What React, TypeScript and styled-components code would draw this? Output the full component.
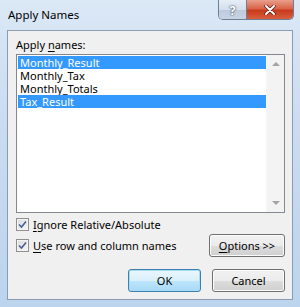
import styled, {createGlobalStyle} from "styled-components";

const GlobalStyle = createGlobalStyle`
    html, body {
        margin: 0;
        padding: 0;
        background: #ffffff;
    }
    #root {
        width: 300px;
        height: 307px;
    }
`;

const Frame = styled.div`
    width: 300px;
    height: 307px;
    box-sizing: border-box;
    display: flex;
    flex-direction: column;
    padding: 0 7px 7px 7px;
    background: linear-gradient(180deg, #dbe8f6 0%, #c9dcf1 40%, #bcd4ee 100%);
    font-family: "Noto Sans", "Open Sans", sans-serif;
    font-size: 11px;
    color: #000000;
`;

const TitleBar = styled.div`
    height: 30px;
    flex-shrink: 0;
    display: flex;
    align-items: flex-start;
`;

const Title = styled.span`
    padding-top: 7px;
    padding-left: 1px;
    font-size: 11.5px;
`;

const CaptionButtons = styled.div`
    margin-left: auto;
    margin-right: -1px;
    display: flex;
    height: 19px;
    border: 1px solid #6d7f95;
    border-top: none;
    border-radius: 0 0 5px 5px;
    overflow: hidden;
`;

const HelpButton = styled.div`
    width: 27px;
    display: flex;
    align-items: center;
    justify-content: center;
    background: linear-gradient(180deg, #e6eef7 0%, #d3dfec 50%, #bccbdc 51%, #c7d5e5 100%);
    border-right: 1px solid #6d7f95;
    color: #ffffff;
    font-weight: bold;
    font-size: 13px;
    text-shadow: 0 0 2px #36475c, 0 0 1px #36475c;
`;

const CloseButton = styled.div`
    width: 46px;
    display: flex;
    align-items: center;
    justify-content: center;
    background: linear-gradient(180deg, #ea9f8c 0%, #d9644a 45%, #c93a1c 55%, #d8603f 100%);
`;

const Panel = styled.div`
    flex: 1;
    display: flex;
    flex-direction: column;
    background: #f0f0f0;
    border: 1px solid #8b9bb0;
    padding: 6px 7px 7px 8px;

    & > * {
        flex-shrink: 0;
    }
`;

const Label = styled.div`
    height: 16px;
    line-height: 16px;
`;

const ListBox = styled.div`
    margin-top: 1px;
    height: 159px;
    box-sizing: border-box;
    display: flex;
    background: #ffffff;
    border: 1px solid #828790;
`;

const Items = styled.div`
    flex: 1;
    display: flex;
    flex-direction: column;
    padding: 1px 0 0 1px;
`;

const Item = styled.div<{$selected?: boolean}>`
    height: 13px;
    line-height: 13px;
    padding-left: 2px;
    background: ${({$selected}) => ($selected ? "#3399ff" : "transparent")};
    color: ${({$selected}) => ($selected ? "#ffffff" : "#000000")};
    white-space: nowrap;
`;

const ScrollBar = styled.div`
    width: 17px;
    display: flex;
    flex-direction: column;
    justify-content: space-between;
    align-items: center;
    background: #f3f3f3;
    border-left: 1px solid #f7f7f7;
    padding: 7px 0;
`;

const Arrow = styled.div<{$down?: boolean}>`
    width: 0;
    height: 0;
    border-left: 4px solid transparent;
    border-right: 4px solid transparent;
    ${({$down}) =>
        $down ? "border-top: 4px solid #a3a3a3;" : "border-bottom: 4px solid #a3a3a3;"}
`;

const CheckRow = styled.div<{$first?: boolean}>`
    display: flex;
    align-items: center;
    gap: 4px;
    height: ${({$first}) => ($first ? "20px" : "22px")};
    margin-top: ${({$first}) => ($first ? "1px" : "0")};
`;

const Options = styled.div`
    display: flex;
    align-items: center;
    justify-content: space-between;
    height: 23px;
`;

const Box = styled.div`
    width: 11px;
    height: 11px;
    border: 1px solid #8f8f8f;
    background: linear-gradient(135deg, #dcdcdc 0%, #f6f6f6 100%);
    display: flex;
    align-items: center;
    justify-content: center;
    box-shadow: inset 0 0 0 1px #f4f4f4;
`;

const Accel = styled.span`
    text-decoration: underline;
    text-underline-offset: 2px;
`;

const Button = styled.button<{$default?: boolean; $wide?: boolean}>`
    width: ${({$wide}) => ($wide ? "76px" : "73px")};
    height: 23px;
    box-sizing: border-box;
    border-radius: 3px;
    border: 1px solid ${({$default}) => ($default ? "#3c7fb1" : "#707070")};
    background: ${({$default}) =>
        $default
            ? "linear-gradient(180deg, #eaf6fd 0%, #d9f0fc 50%, #bee6fd 51%, #a7d9f5 100%)"
            : "linear-gradient(180deg, #f2f2f2 0%, #ebebeb 50%, #dddddd 51%, #cfcfcf 100%)"};
    box-shadow: inset 0 0 0 1px ${({$default}) => ($default ? "#a7dcf6" : "#fcfcfc")};
    font-family: "Noto Sans", "Open Sans", sans-serif;
    font-size: 11px;
    color: #000000;
    padding: 0;
`;

const Footer = styled.div`
    display: flex;
    justify-content: flex-end;
    gap: 11px;
    margin-top: 12px;
`;

function Check() {
    return (
        <Box>
            <svg width="9" height="9" viewBox="0 0 9 9">
                <path d="M1 4.5 L3.5 7 L8 1.5" fill="none" stroke="#4a5f97" strokeWidth="1.6" />
            </svg>
        </Box>
    );
}

export default function App() {
    return (
        <>
            <GlobalStyle />
            <Frame>
                <TitleBar>
                    <Title>Apply Names</Title>
                    <CaptionButtons>
                        <HelpButton>?</HelpButton>
                        <CloseButton>
                            <svg width="12" height="10" viewBox="0 0 12 10">
                                <path d="M2 1 L10 9 M10 1 L2 9" stroke="#5a1a10" strokeWidth="3.4" strokeLinecap="round" />
                                <path d="M2 1 L10 9 M10 1 L2 9" stroke="#ffffff" strokeWidth="2" strokeLinecap="round" />
                            </svg>
                        </CloseButton>
                    </CaptionButtons>
                </TitleBar>
                <Panel>
                    <Label>
                        Apply <Accel>n</Accel>ames:
                    </Label>
                    <ListBox>
                        <Items>
                            <Item $selected>Monthly_Result</Item>
                            <Item>Monthly_Tax</Item>
                            <Item>Monthly_Totals</Item>
                            <Item $selected>Tax_Result</Item>
                        </Items>
                        <ScrollBar>
                            <Arrow />
                            <Arrow $down />
                        </ScrollBar>
                    </ListBox>
                    <CheckRow $first>
                        <Check />
                        <span>
                            <Accel>I</Accel>gnore Relative/Absolute
                        </span>
                    </CheckRow>
                    <Options>
                        <CheckRow>
                            <Check />
                            <span>
                                <Accel>U</Accel>se row and column names
                            </span>
                        </CheckRow>
                        <Button $wide>
                            <Accel>O</Accel>ptions &gt;&gt;
                        </Button>
                    </Options>
                    <Footer>
                        <Button $default>OK</Button>
                        <Button>Cancel</Button>
                    </Footer>
                </Panel>
            </Frame>
        </>
    );
}
